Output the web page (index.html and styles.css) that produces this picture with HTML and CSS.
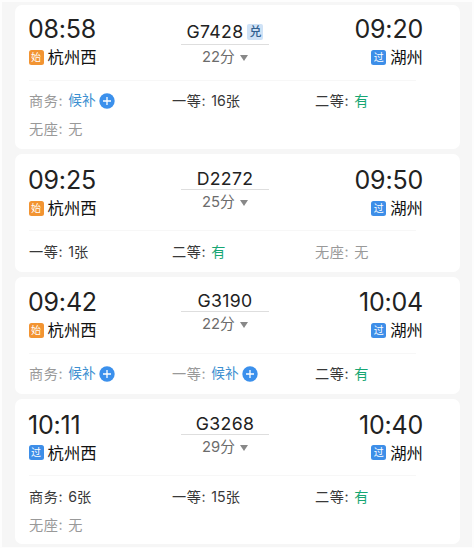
FILE: index.html
```html
<!DOCTYPE html>
<html lang="zh-CN">
<head>
<meta charset="utf-8">
<title>杭州西 - 湖州</title>
<link rel="stylesheet" href="styles.css">
</head>
<body>
<main class="list">
  <article class="card card-first">
    <div class="summary">
      <div class="stop"><div class="time">08:58</div><div class="station"><span class="tag tag-start">始</span><span class="name">杭州西</span></div></div>
      <div class="train"><div class="code"><span>G7428</span><span class="exchange">兑</span></div><div class="track"></div><div class="duration"><span>22分</span><i class="caret"></i></div></div>
      <div class="stop stop-end"><div class="time">09:20</div><div class="station"><span class="tag tag-pass">过</span><span class="name">湖州</span></div></div>
    </div>
    <div class="seats">
      <div class="seat muted"><span class="label">商务:</span><span class="wait">候补</span><svg class="plus" viewBox="0 0 16 16"><circle cx="8" cy="8" r="7.7"/><path d="M8 4v8M4 8h8"/></svg></div>
      <div class="seat"><span class="label">一等:</span><span>16张</span></div>
      <div class="seat"><span class="label">二等:</span><span class="yes">有</span></div>
      <div class="seat muted"><span class="label">无座:</span><span>无</span></div>
    </div>
  </article>

  <article class="card card-second">
    <div class="summary">
      <div class="stop"><div class="time">09:25</div><div class="station"><span class="tag tag-start">始</span><span class="name">杭州西</span></div></div>
      <div class="train"><div class="code"><span>D2272</span></div><div class="track"></div><div class="duration"><span>25分</span><i class="caret"></i></div></div>
      <div class="stop stop-end"><div class="time">09:50</div><div class="station"><span class="tag tag-pass">过</span><span class="name">湖州</span></div></div>
    </div>
    <div class="seats">
      <div class="seat"><span class="label">一等:</span><span>1张</span></div>
      <div class="seat"><span class="label">二等:</span><span class="yes">有</span></div>
      <div class="seat muted"><span class="label">无座:</span><span>无</span></div>
    </div>
  </article>

  <article class="card card-third">
    <div class="summary">
      <div class="stop"><div class="time">09:42</div><div class="station"><span class="tag tag-start">始</span><span class="name">杭州西</span></div></div>
      <div class="train"><div class="code"><span>G3190</span></div><div class="track"></div><div class="duration"><span>22分</span><i class="caret"></i></div></div>
      <div class="stop stop-end"><div class="time">10:04</div><div class="station"><span class="tag tag-pass">过</span><span class="name">湖州</span></div></div>
    </div>
    <div class="seats">
      <div class="seat muted"><span class="label">商务:</span><span class="wait">候补</span><svg class="plus" viewBox="0 0 16 16"><circle cx="8" cy="8" r="7.7"/><path d="M8 4v8M4 8h8"/></svg></div>
      <div class="seat muted"><span class="label">一等:</span><span class="wait">候补</span><svg class="plus" viewBox="0 0 16 16"><circle cx="8" cy="8" r="7.7"/><path d="M8 4v8M4 8h8"/></svg></div>
      <div class="seat"><span class="label">二等:</span><span class="yes">有</span></div>
    </div>
  </article>

  <article class="card card-fourth">
    <div class="summary">
      <div class="stop"><div class="time">10:11</div><div class="station"><span class="tag tag-pass">过</span><span class="name">杭州西</span></div></div>
      <div class="train"><div class="code"><span>G3268</span></div><div class="track"></div><div class="duration"><span>29分</span><i class="caret"></i></div></div>
      <div class="stop stop-end"><div class="time">10:40</div><div class="station"><span class="tag tag-pass">过</span><span class="name">湖州</span></div></div>
    </div>
    <div class="seats">
      <div class="seat"><span class="label">商务:</span><span>6张</span></div>
      <div class="seat"><span class="label">一等:</span><span>15张</span></div>
      <div class="seat"><span class="label">二等:</span><span class="yes">有</span></div>
      <div class="seat muted"><span class="label">无座:</span><span>无</span></div>
    </div>
  </article>
</main>
</body>
</html>
```
FILE: styles.css
```css
* { box-sizing: border-box; }
body {
  margin: 0;
  height: 548px;
  padding: 2px 2px 1px;
  background: #fdfdfd;
  color: #222;
  font-family: Inter, "Noto Sans CJK SC", sans-serif;
  overflow: hidden;
}
.list {
  display: flex;
  flex-direction: column;
  gap: 5px;
  height: 545px;
  padding: 3px 12px 0 13px;
  background: #f6f6f6;
}
.card {
  flex: none;
  height: 118px;
  padding: 0 14px;
  background: #fff;
  border-radius: 7px;
}
.card-first { height: 144px; --stop: 9px; --train: 16px; --track: 1px; }
.card-second { --stop: 11px; --train: 14px; --track: -1px; }
.card-third { height: 117px; --stop: 10px; --train: 13px; --track: -1px; }
.card-fourth { height: 145px; --stop: 11px; --train: 14px; --track: -1px; }
.summary {
  display: grid;
  grid-template-columns: 152px 88px 1fr;
  height: 77px;
  margin-right: 30px;
  border-bottom: 1px solid #f7f7f7;
}
.card-first .summary { height: 76px; }
.stop { padding-top: var(--stop); }
.stop-end {
  display: flex;
  flex-direction: column;
  align-items: flex-end;
  margin-right: -7px;
}
.time {
  height: 30px;
  line-height: 30px;
  margin-left: -1px;
  font-size: 25px;
  letter-spacing: -.2px;
}
.station {
  display: flex;
  align-items: center;
  height: 26px;
  color: #111;
}
.card-fourth .station { height: 25px; }
.tag {
  width: 15px;
  height: 15px;
  margin: 0 4px 0 -.5px;
  border-radius: 2.5px;
  color: #fff;
  font-size: 10px;
  line-height: 15px;
  text-align: center;
}
.tag-start { background: #f29432; }
.tag-pass { background: #3d8ee8; }
.name { font-size: 16.4px; line-height: 26px; }
.train {
  display: flex;
  flex-direction: column;
  align-items: center;
  padding-top: var(--train);
}
.code {
  display: flex;
  align-items: center;
  gap: 4px;
  height: 22px;
  font-size: 17.7px;
  letter-spacing: .3px;
  line-height: 22px;
  white-space: nowrap;
}
.exchange {
  width: 16px;
  height: 16px;
  border-radius: 2px;
  background: #cfe2f6;
  color: #31608f;
  font-size: 12px;
  font-weight: 500;
  letter-spacing: 0;
  line-height: 15px;
  text-align: center;
}
.track {
  width: 88px;
  height: 1px;
  flex: none;
  margin-top: var(--track);
  background: #dedede;
}
.duration {
  display: flex;
  align-items: center;
  height: 24px;
  color: #6c6c6c;
  font-size: 14.8px;
  line-height: 24px;
}
.caret {
  margin: 2px 0 0 5px;
  border: 4.5px solid transparent;
  border-top: 6px solid #888;
  border-bottom: 0;
}
.seats {
  display: grid;
  grid-template-columns: repeat(3, 143px);
  grid-auto-rows: 28px;
  padding-top: 6px;
}
.card-second .seats,
.card-fourth .seats { padding-top: 7px; }
.seat {
  display: flex;
  align-items: center;
  height: 27px;
  font-size: 14.2px;
  line-height: 27px;
  color: #393939;
  white-space: nowrap;
}
.label { margin-right: 5px; letter-spacing: .6px; }
.muted { color: #999; }
.wait { color: #3c8fd0; font-size: 13.7px; }
.yes { color: #17a673; }
.plus { width: 16px; height: 16px; margin-left: 3px; }
.plus circle { fill: #3b90ec; }
.plus path { fill: none; stroke: #fff; stroke-width: 1.3; }
```
